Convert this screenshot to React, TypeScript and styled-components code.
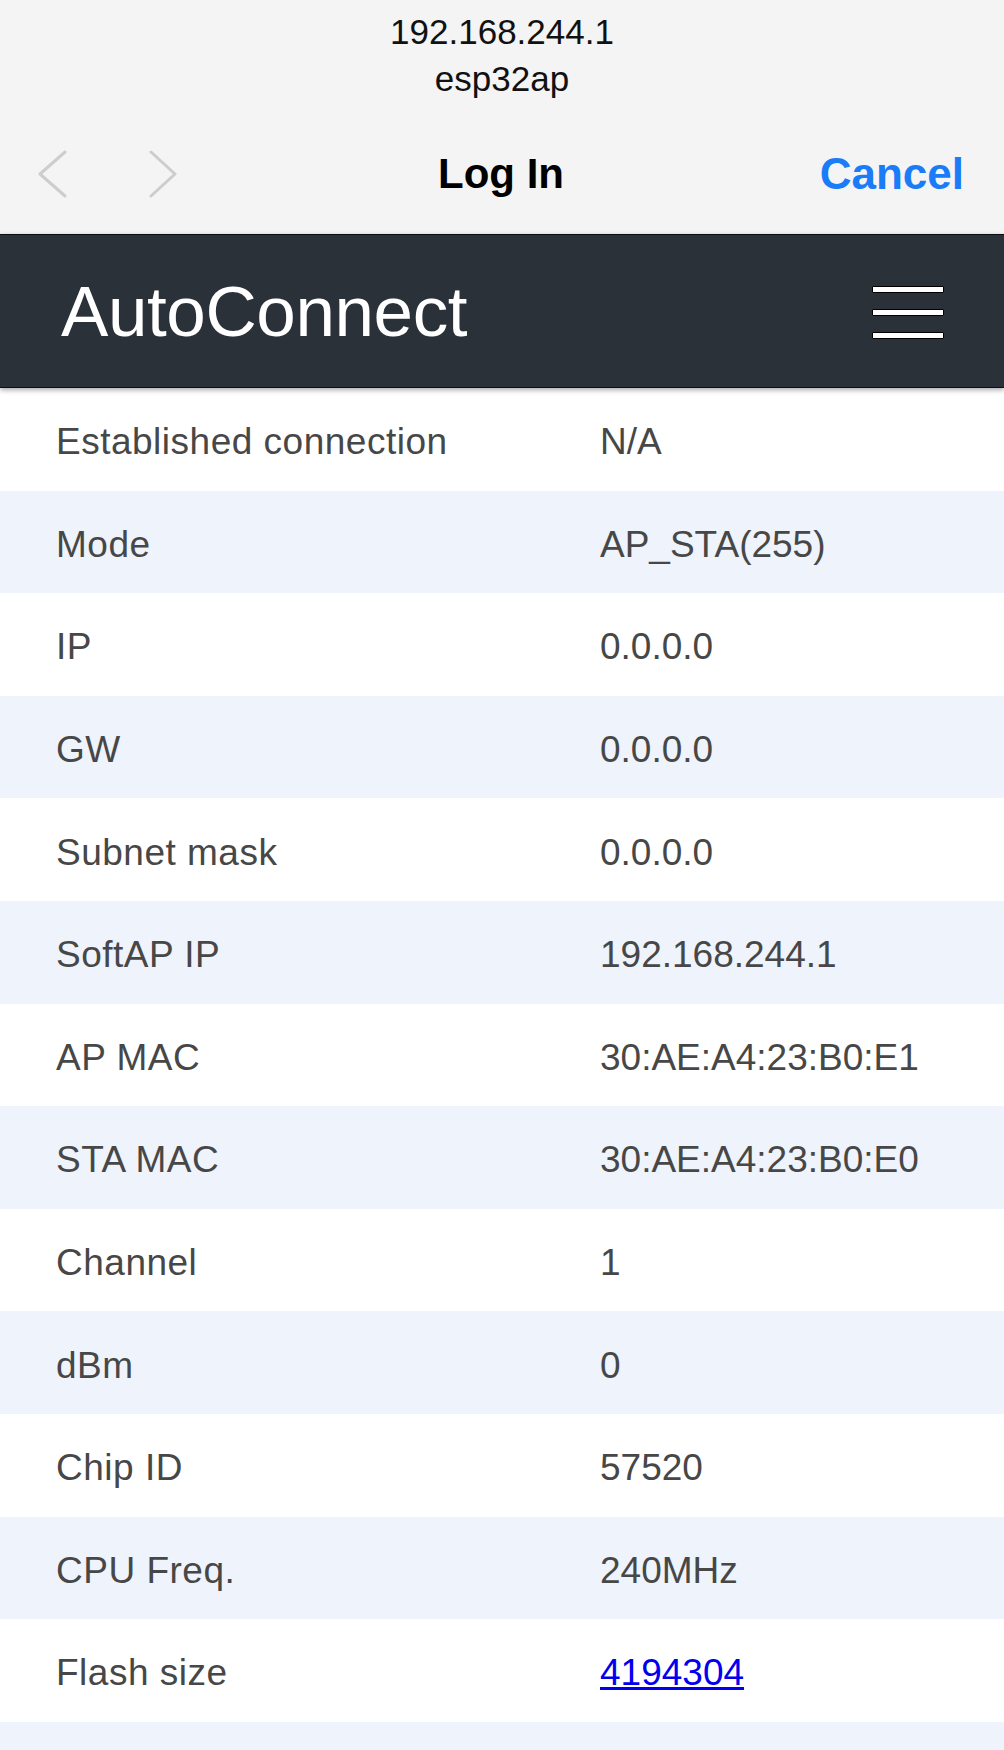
import styled, { createGlobalStyle } from 'styled-components'

const GlobalStyle = createGlobalStyle`
  html, body {
    margin: 0;
    padding: 0;
    background: #ffffff;
    font-family: "Liberation Sans", Arial, sans-serif;
  }
`;

const Page = styled.div`
  width: 1004px;
  min-height: 1750px;
  display: flex;
  flex-direction: column;
  overflow: hidden;
`;

const BrowserBar = styled.div`
  height: 234px;
  box-sizing: border-box;
  background: #f4f4f4;
  padding-top: 8px;
  display: flex;
  flex-direction: column;
`;

const Address = styled.div`
  text-align: center;
  font-size: 35px;
  line-height: 47px;
  color: #111;
`;

const NavRow = styled.div`
  margin-top: 24px;
  height: 96px;
  display: grid;
  grid-template-columns: 1fr auto 1fr;
  align-items: center;
  padding: 0 40px 0 38px;
`;

const Arrows = styled.div`
  display: flex;
  gap: 80px;
  align-items: center;
`;

const Title = styled.div`
  font-size: 42px;
  font-weight: 700;
  color: #000;
`;

const CancelBtn = styled.div`
  justify-self: end;
  font-size: 44px;
  font-weight: 700;
  color: #1a7cf6;
`;

const Header = styled.header`
  height: 154px;
  box-sizing: border-box;
  background: #2a3139;
  border-top: 1px solid #0c0f12;
  border-bottom: 1px solid #0c0f12;
  box-shadow: 0 2px 5px rgba(0, 0, 0, 0.35);
  display: flex;
  align-items: center;
  justify-content: space-between;
  padding: 0 60px 0 61px;
  position: relative;
  z-index: 1;
`;

const Brand = styled.h1`
  margin: 0;
  font-size: 71px;
  font-weight: 400;
  color: #fff;
  letter-spacing: -0.4px;
`;

const Burger = styled.div`
  display: flex;
  flex-direction: column;
  gap: 16px;
  margin-top: 2px;
`;

const BurgerLine = styled.span`
  display: block;
  width: 70px;
  height: 5px;
  background: #fff;
  border: 1px solid #000;
  border-radius: 1px;
`;

const Table = styled.div`
  display: flex;
  flex-direction: column;
`;

const Row = styled.div<{ $alt: boolean }>`
  height: 102.6px;
  display: grid;
  grid-template-columns: 544px 1fr;
  align-items: center;
  background: ${(p) => (p.$alt ? '#eef3fc' : '#ffffff')};
`;

const Cell = styled.div<{ $label?: boolean }>`
  padding: 6px 0 0 56px;
  font-size: 37px;
  color: #474747;
  white-space: nowrap;
  letter-spacing: ${(p) => (p.$label ? '0.5px' : '0')};
`;

const ValueLink = styled.a`
  color: #0000ee;
  text-decoration: underline;
`;

const Chevron = ({ dir }: { dir: 'left' | 'right' }) => (
  <svg width="30" height="48" viewBox="0 0 30 48">
    <polyline
      points={dir === 'left' ? '27,2 2,24 27,46' : '3,2 27,24 3,46'}
      fill="none"
      stroke="#cdcdcd"
      strokeWidth="3"
      strokeLinecap="round"
      strokeLinejoin="round"
    />
  </svg>
);

const rows: [string, string, boolean?][] = [
  ['Established connection', 'N/A'],
  ['Mode', 'AP_STA(255)'],
  ['IP', '0.0.0.0'],
  ['GW', '0.0.0.0'],
  ['Subnet mask', '0.0.0.0'],
  ['SoftAP IP', '192.168.244.1'],
  ['AP MAC', '30:AE:A4:23:B0:E1'],
  ['STA MAC', '30:AE:A4:23:B0:E0'],
  ['Channel', '1'],
  ['dBm', '0'],
  ['Chip ID', '57520'],
  ['CPU Freq.', '240MHz'],
  ['Flash size', '4194304', true],
  ['', ''],
];

export default function App() {
  return (
    <>
      <GlobalStyle />
      <Page>
        <BrowserBar>
          <Address>192.168.244.1</Address>
          <Address>esp32ap</Address>
          <NavRow>
            <Arrows>
              <Chevron dir="left" />
              <Chevron dir="right" />
            </Arrows>
            <Title>Log In</Title>
            <CancelBtn>Cancel</CancelBtn>
          </NavRow>
        </BrowserBar>
        <Header>
          <Brand>AutoConnect</Brand>
          <Burger>
            <BurgerLine />
            <BurgerLine />
            <BurgerLine />
          </Burger>
        </Header>
        <Table>
          {rows.map(([label, value, link], i) => (
            <Row key={i} $alt={i % 2 === 1}>
              <Cell $label>{label}</Cell>
              <Cell>{link ? <ValueLink href="#">{value}</ValueLink> : value}</Cell>
            </Row>
          ))}
        </Table>
      </Page>
    </>
  )
}
